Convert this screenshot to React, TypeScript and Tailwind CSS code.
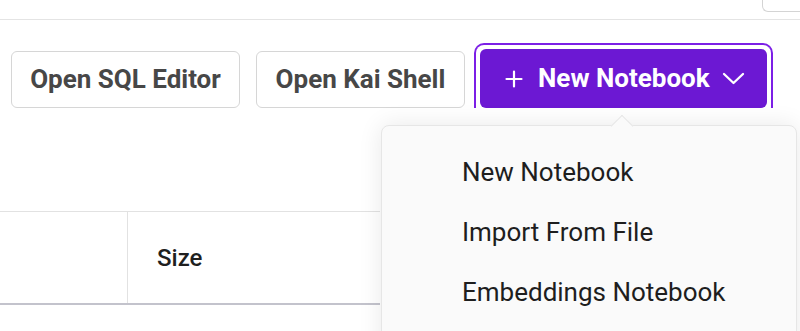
const menuItems = ['New Notebook', 'Import From File', 'Embeddings Notebook']

export default function App() {
  return (
    <div className="relative h-[331px] w-[800px] overflow-hidden bg-white font-['Roboto',sans-serif]">
      {/* top strip */}
      <div className="flex h-[20px] justify-end border-b border-[#e4e4e4]">
        <div className="h-[12px] w-[38px] rounded-bl-[6px] border-b border-l border-[#d4d4d4]" />
      </div>

      {/* action row */}
      <div className="flex items-start pl-[11px] pt-[23px]">
        <button className="mt-[8px] h-[57px] w-[229px] rounded-[6px] border-[1.5px] border-[#d6d6d6] bg-white text-[26px] font-bold text-[#474747]">
          Open SQL Editor
        </button>
        <button className="ml-[16px] mt-[8px] h-[57px] w-[209px] rounded-[6px] border-[1.5px] border-[#d6d6d6] bg-white text-[26px] font-bold text-[#474747]">
          Open Kai Shell
        </button>
        <div className="ml-[9px] rounded-t-[10px] border-2 border-b-0 border-[#7c1fe6] px-[4px] pt-[4px]">
          <button className="flex h-[59px] w-[287px] items-center rounded-[6px] bg-[#6c18d3] pl-[25px] pr-[22px] text-[26px] font-bold text-white">
            <svg width="18" height="18" viewBox="0 0 18 18" fill="none" stroke="currentColor" strokeWidth="2.2" strokeLinecap="round">
              <path d="M9 1.5v15M1.5 9h15" />
            </svg>
            <span className="ml-[15px]">New Notebook</span>
            <svg className="ml-auto" width="23" height="13" viewBox="0 0 23 13" fill="none" stroke="currentColor" strokeWidth="2.3" strokeLinecap="round" strokeLinejoin="round">
              <path d="M2 2l9.5 9 9.5-9" />
            </svg>
          </button>
        </div>
      </div>

      {/* table header */}
      <div className="mt-[103px] flex h-[94px] w-[380px] border-t border-b-2 border-t-[#e2e2e2] border-b-[#c3c3cc]">
        <div className="w-[128px] border-r border-[#e2e2e2]" />
        <div className="flex items-center pl-[29px] text-[24px] font-medium text-[#1f1f1f]">Size</div>
      </div>

      {/* dropdown menu */}
      <div className="absolute left-[381px] top-[125px] h-[230px] w-[416px] rounded-[8px] border border-[#e6e6e6] bg-[#fafafa] shadow-[0_0_24px_rgba(0,0,0,0.09)]">
        <div className="absolute -top-[8px] left-[232px] size-[16px] rotate-45 border-l border-t border-[#e6e6e6] bg-[#fafafa]" />
        <div className="flex flex-col pl-[80px] pt-[16px]">
          {menuItems.map((item) => (
            <div key={item} className="flex h-[60px] items-center text-[26px] text-[#1e1e1e]">
              {item}
            </div>
          ))}
        </div>
      </div>
    </div>
  )
}
